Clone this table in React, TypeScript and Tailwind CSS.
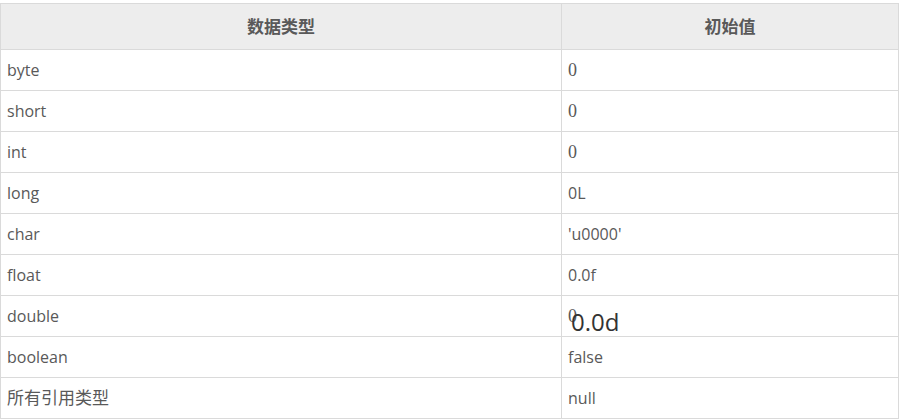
const rows: [string, string][] = [
  ["byte", "0"],
  ["short", "0"],
  ["int", "0"],
  ["long", "0L"],
  ["char", "'u0000'"],
  ["float", "0.0f"],
  ["double", "0"],
  ["boolean", "false"],
  ["所有引用类型", "null"],
]

const font = { fontFamily: '"Open Sans", "Noto Sans CJK SC", sans-serif' }

export default function App() {
  return (
    <div className="min-h-screen bg-white pt-[3px] pr-px" style={font}>
      <table className="w-full border-collapse text-[16px] text-[#595959]">
        <thead>
          <tr className="bg-[#ededed]">
            <th className="h-[46px] w-[561px] border border-[#dadada] text-center text-[17px] font-bold">数据类型</th>
            <th className="h-[46px] border border-[#dadada] text-center text-[17px] font-bold">初始值</th>
          </tr>
        </thead>
        <tbody>
          {rows.map(([type, value]) => (
            <tr key={type}>
              <td className={`h-[41px] border border-[#dadada] px-[6px] align-middle ${/[a-z]/.test(type) ? "" : "text-[17px]"}`}>
                {type}
              </td>
              <td className="relative h-[41px] border border-[#dadada] px-[6px] align-middle">
                {value === "0" ? (
                  <span className="font-['Liberation_Serif',serif] text-[18px]">0</span>
                ) : (
                  value
                )}
                {type === "double" && (
                  <span className="absolute left-[9px] top-[14px] text-[24px] leading-none text-[#333]">0.0d</span>
                )}
              </td>
            </tr>
          ))}
        </tbody>
      </table>
    </div>
  )
}
